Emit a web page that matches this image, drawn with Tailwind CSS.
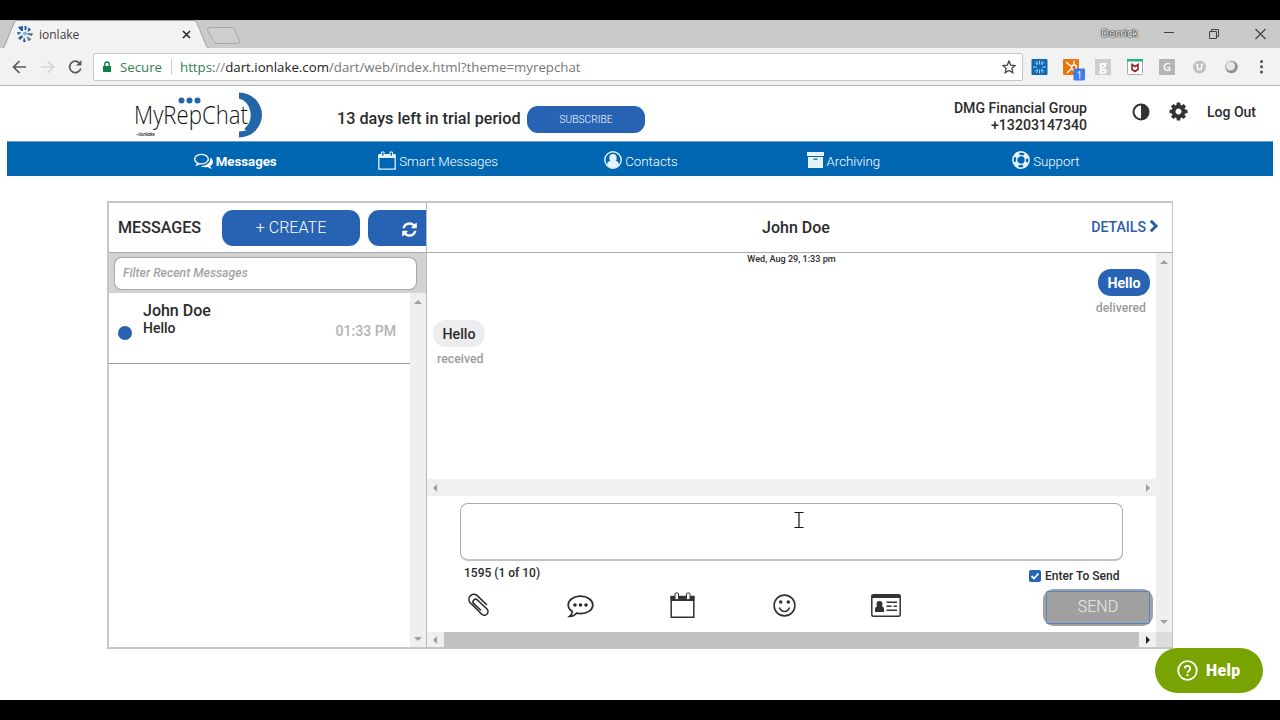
<!DOCTYPE html>
<html lang="en">
<head>
    <meta charset="UTF-8">
    <meta name="viewport" content="width=device-width, initial-scale=1.0">
    <title>ionlake</title>
    <script src="https://cdn.jsdelivr.net/npm/@tailwindcss/browser@4"></script>
</head>
<body class="w-[1280px] h-[720px] overflow-hidden bg-black py-5 font-['Roboto',sans-serif] text-[#2b2b2b]">

    <!-- Browser tabs -->
    <div class="h-7 bg-[#cacaca] flex font-['Open_Sans',sans-serif] relative">
        <svg class="absolute left-0 top-0" width="260" height="28" viewBox="0 0 260 28">
            <path d="M0 28.500H2Q4 28 5 25L14 3Q15 .5 18 .5H193Q196 .5 197 3L206 25Q207 28 210 28.500Z" fill="#f2f2f2" stroke="#a0a0a0"/>
            <path d="M210 7.500H232Q234 7.500 235 10L239.500 21Q240 23.500 238 23.500H217Q215 23.500 214 21L207.500 10Q207 7.500 210 7.500Z" fill="#cfcfcf" stroke="#a8a8a8"/>
        </svg>
        <div class="relative flex items-center w-[210px] pl-[17px] pr-[19px]">
            <svg width="16" height="16" viewBox="0 0 16 16" fill="#1b62a5">
                <path d="M1 1l5-1v5H4zM7.500 0h2v4h-2zM11.500 1l2.500 3-3.500 2zM0 6l4.500.5L1 9zM1 12l4-3 1 2-3 3zM7 11l2 5H6z"/>
                <path d="M10 7h6l-1 3-4-1zM9.500 10l5 3-3 2.500z" fill="#6b7d92"/>
                <circle cx="8" cy="7.500" r="2" fill="#7db4df"/>
            </svg>
            <span class="ml-[6px] mt-[2px] text-[12px] leading-[28px] text-[#3d3d3d] grow">ionlake</span>
            <svg width="9" height="9" viewBox="0 0 9 9" stroke="#222" stroke-width="1.500"><path d="M1 1l7 7M8 1l-7 7"/></svg>
        </div>
        <div class="grow"></div>
        <div class="flex items-center text-[11px] text-white">
            <span class="w-[63px] -mt-[2px] font-medium [text-shadow:0_0_1px_#000,0_0_1px_#000,0_0_2px_#333]">Derrick</span>
            <svg width="116" height="16" viewBox="0 0 116 16" fill="none" stroke="#444">
                <path d="M0 6.500h10"/>
                <path d="M45.500 5.500h7v7h-7zM47.500 5.500v-2h7v7h-2"/>
                <path d="M91.500 3l10 10M101.500 3l-10 10" stroke-width="1.200"/>
            </svg>
        </div>
    </div>

    <!-- Address bar -->
    <div class="h-[38px] bg-[#f2f2f2] border-b border-[#b5b5b5] flex items-center font-['Open_Sans',sans-serif]">
        <svg class="shrink-0" width="93" height="38" viewBox="0 0 93 38" fill="none" stroke="#5a5a5a" stroke-width="1.700">
            <path d="M26 19H14M19.500 13l-6 6 6 6"/>
            <path d="M41 19h12M47.500 13l6 6-6 6" stroke="#d5d5d5"/>
            <path d="M79.500 15a5.700 5.700 0 1 0 1.300 5.500"/>
            <path d="M81.500 12v5.500H76z" fill="#5a5a5a" stroke="none"/>
        </svg>
        <div class="w-[930px] h-[28px] bg-white border border-[#c6c6c6] rounded-[2px] flex items-center text-[13.250px]">
            <svg class="ml-[9px]" width="8" height="12" viewBox="0 0 8 12"><path d="M0 5h8v6H0z" fill="#0b8043"/><path d="M1.800 5V3.200a2.200 2.200 0 0 1 4.400 0V5" fill="none" stroke="#0b8043" stroke-width="1.300"/></svg>
            <span class="ml-[9px] mt-[2px] w-[51px] text-[#2f8050]">Secure</span>
            <span class="w-px h-4 bg-[#ccc]"></span>
            <span class="ml-[8px] mt-[2px] text-[#222] whitespace-nowrap"><span class="text-[#2f8050]">https:</span><span class="text-[#888]">//</span>dart.ionlake.com<span class="text-[#777]">/dart/web/index.html?theme=myrepchat</span></span>
            <span class="grow"></span>
            <svg class="mr-[6px]" width="14" height="14" viewBox="0 0 14 14" fill="none" stroke="#444" stroke-width="1.300"><path d="M7 1l1.700 4.100 4.400.4-3.300 2.900 1 4.300L7 10.400l-3.800 2.300 1-4.300L.9 5.500l4.400-.4z"/></svg>
        </div>
        <!-- Extensions -->
        <svg class="shrink-0 ml-px" width="256" height="38" viewBox="0 0 256 38">
            <rect x="7.500" y="11" width="16" height="16" rx="1" fill="#0d69b3"/>
            <g stroke="#d6e9f8" stroke-width=".8" fill="none"><path d="M15.500 12.500v4M15.500 21.500v4M9 19h4M18 19h4M11 14.500l2.500 2.500M17.500 21l2.500 2.500M20 14.500L17.500 17M13.500 21L11 23.500M12.500 13l1.300 3.200M18.500 13l-1.300 3.200M12.500 25l1.300-3.200M18.500 25l-1.300-3.200"/></g>
            <rect x="39" y="11" width="16" height="16" rx="1" fill="#e8760b"/>
            <g stroke="#fff" fill="none"><path d="M42 14l6 5M50 12.500v4M47 21l-4 4" stroke-width="1.300"/><circle cx="50" cy="19.500" r="2.500" stroke-width="1.500"/></g>
            <rect x="49.500" y="20.500" width="11.500" height="12" rx="1" fill="#3f7de8"/>
            <text x="55.300" y="30.500" font-size="10" text-anchor="middle" fill="#fff">1</text>
            <rect x="71" y="11" width="16" height="16" fill="#cdcdcd"/>
            <text x="79" y="22.500" font-size="14" font-weight="700" text-anchor="middle" fill="#fff">g</text>
            <rect x="103.500" y="11.500" width="15" height="15" rx="1" fill="#fff" stroke="#aaa"/>
            <path d="M103 11h16v2.500h-16z" fill="#1fb57b"/>
            <path d="M108 16.500v5l3 2 3-2v-5l-3 2z" fill="#fff" stroke="#a01e2d" stroke-width="1.600"/>
            <rect x="135" y="11" width="16" height="16" fill="#b5b5b5"/>
            <text x="143" y="23" font-size="11" font-weight="600" text-anchor="middle" fill="#fff">G</text>
            <circle cx="175.500" cy="19" r="6.500" fill="#c0c0c0"/>
            <path d="M172 16.500h1.500v3a2 2 0 0 0 4 0v-3h1.500" stroke="#fff" stroke-width="1.300" fill="none"/>
            <circle cx="207.500" cy="19" r="6.200" fill="#8e8e8e"/>
            <circle cx="206.600" cy="18" r="4.600" fill="#e6e6e6"/>
            <g fill="#505050"><circle cx="237.500" cy="13.500" r="1.500"/><circle cx="237.500" cy="18.700" r="1.500"/><circle cx="237.500" cy="23.900" r="1.500"/></g>
        </svg>
    </div>

    <div class="h-[614px] bg-white px-[7px] relative">

        <!-- Header -->
        <header class="h-[55px] flex font-medium">
            <svg class="ml-[126px] mt-[4px] shrink-0 overflow-visible" width="130" height="50" viewBox="0 0 130 50">
                <g fill="#2366a8"><circle cx="48.500" cy="10.500" r="3"/><circle cx="56.500" cy="10.500" r="3"/><circle cx="64.500" cy="10.500" r="3"/></g>
                <path d="M106 2.500A23 22.500 0 0 1 106 47.500V41.500Q111 41 113 40.500L111.500 38.500A15.500 17 0 0 0 106 8.500Z" fill="#2366a8"/>
                <text x="1" y="34" font-family="Open Sans" font-weight="300" font-size="25.500" fill="#111" textLength="114" lengthAdjust="spacingAndGlyphs">MyRepChat</text>
                <text x="3" y="46" font-family="Open Sans" font-weight="600" font-size="5" font-style="italic" fill="#222" textLength="19">-‹ionlake</text>
            </svg>
            <div class="ml-[74px] mt-[23px] text-[16.200px] leading-[20px] whitespace-nowrap w-[190px]">13 days left in trial period</div>
            <button class="mt-[20px] w-[118px] h-[27px] rounded-[11px] bg-[#2762b3] text-white text-[10.200px] font-light shrink-0">SUBSCRIBE</button>
            <div class="grow"></div>
            <div class="mt-[14px] text-right text-[14.100px] leading-[16.500px] whitespace-nowrap">DMG Financial Group<br>+13203147340</div>
            <svg class="ml-[44px] mt-[16px]" width="20" height="20" viewBox="0 0 20 20"><circle cx="10" cy="10" r="7.500" fill="none" stroke="#333" stroke-width="2"/><path d="M10 2a8 8 0 0 1 0 16z" fill="#333"/></svg>
            <svg class="ml-[17px] mt-[15px]" width="21" height="21" viewBox="0 0 1792 1792" fill="#333"><path d="M1152 896q0-106-75-181t-181-75-181 75-75 181 75 181 181 75 181-75 75-181zm512-109v222q0 12-8 23t-20 13l-185 28q-19 54-39 91 35 50 107 138 10 12 10 25t-9 23q-27 37-99 108t-94 71q-12 0-26-9l-138-108q-44 23-91 38-16 136-29 186-7 28-36 28h-222q-14 0-24.500-8.500t-11.500-21.500l-28-184q-49-16-90-37l-141 107q-10 9-25 9-14 0-25-11-126-114-165-168-7-10-7-23 0-12 8-23 15-21 51-66.500t54-70.500q-27-50-41-99l-183-27q-13-2-21-12.500t-8-23.500v-222q0-12 8-23t19-13l186-28q14-46 39-92-40-57-107-138-10-12-10-24 0-10 9-23 26-36 98.500-107.500t94.500-71.500q13 0 26 10l138 107q44-23 91-38 16-136 29-186 7-28 36-28h222q14 0 24.500 8.500t11.500 21.500l28 184q49 16 90 37l142-107q9-9 24-9 13 0 25 10 129 119 165 170 7 8 7 22 0 12-8 23-15 21-51 66.500t-54 70.500q26 50 41 98l183 28q13 2 21 12.500t8 23.500z"/></svg>
            <a class="ml-[18px] mr-[17px] mt-[16px] text-[14px] leading-[20px] whitespace-nowrap">Log Out</a>
        </header>

        <!-- Main menu -->
        <nav class="h-[35px] bg-[#0066b2] border-t border-[#6f9fc6] text-white text-[13.250px] font-light pl-[128px] pr-[126px]">
            <div class="grid grid-cols-5 h-full pt-[2px]">
                <a class="flex items-center justify-center gap-[3px] font-bold">
                    <svg class="-ml-[2px]" width="19" height="19" viewBox="0 0 1792 1792" fill="#fff"><path d="M704 384q-153 0-286 52t-211.500 141-78.500 191q0 82 53 158t149 132l97 56-35 84q34-20 62-39l44-31 53 10q78 14 153 14 153 0 286-52t211.500-141 78.500-191-78.500-191-211.500-141-286-52zm0-128q191 0 353.500 68.500t256.500 186.500 94 257-94 257-256.500 186.500-353.500 68.500q-86 0-176-16-124 88-278 128-36 9-86 16h-3q-11 0-20.500-8t-11.500-21q-1-3-1-6.500t.5-6.500 2-6l2.500-5 3.500-5.500 4-5 4.500-5 4-4.500q5-6 23-25t26-29.500 22.500-29 25-38.500 20.500-44q-124-72-195-177t-71-224q0-139 94-257t256.500-186.500 353.500-68.500zm822 1169q10 24 20.500 44t25 38.500 22.500 29 26 29.500 23 25q1 1 4 4.500t4.500 5 4 5 3.500 5.500l2.500 5 2 6 .5 6.500-1 6.500q-3 14-13 22t-22 7q-50-7-86-16-154-40-278-128-90 16-176 16-271 0-472-132 58 4 88 4 161 0 309-45t264-129q125-92 192-212t67-254q0-77-23-152 129 71 204 178t75 230q0 120-71 224.500t-195 176.500z"/></svg>
                    <span class="pt-[4px]">Messages</span>
                </a>
                <a class="flex items-center justify-center gap-[3px]">
                    <svg class="-ml-px" width="18" height="19" viewBox="0 0 18 19"><path d="M.8 4.500h16.400v13.700H.8z" fill="none" stroke="#e6f1fa" stroke-width="1.300"/><path d="M.5 3h17v4H.5z" fill="#e6f1fa"/><path d="M3.500 1h2.500v4H3.500zM12 1h2.500v4H12z" fill="#0066b2" stroke="#e6f1fa"/></svg>
                    <span class="pt-[4px]">Smart Messages</span>
                </a>
                <a class="flex items-center justify-center gap-[3px]">
                    <svg width="18" height="18" viewBox="0 0 18 18"><circle cx="9" cy="9" r="8.200" fill="none" stroke="#e6f1fa" stroke-width="1.400"/><ellipse cx="9" cy="7" rx="3.700" ry="4" fill="#e6f1fa"/><path d="M3 14c0-2.500 1.500-3.800 3.300-4.200Q9 12 11.700 9.800C13.500 10.200 15 11.500 15 14Q12.500 17 9 17T3 14z" fill="#e6f1fa"/></svg>
                    <span class="pt-[4px]">Contacts</span>
                </a>
                <a class="flex items-center justify-center gap-[3px]">
                    <svg width="17" height="18" viewBox="0 0 17 18" fill="#e6f1fa"><path d="M0 1h17v4H0z"/><path d="M1 6h15v11H1zM6.500 7.500v1.200h4V7.500z" fill-rule="evenodd"/></svg>
                    <span class="pt-[4px]">Archiving</span>
                </a>
                <a class="flex items-center justify-center gap-[3px]">
                    <svg width="18" height="18" viewBox="0 0 18 18" fill="none"><circle cx="9" cy="9" r="6.300" stroke="#e6f1fa" stroke-width="5.200"/><circle cx="9" cy="9" r="6.200" stroke="#0066b2" stroke-width="2.200" stroke-dasharray="4.600 5.139" stroke-dashoffset="2.300"/></svg>
                    <span class="pt-[4px]">Support</span>
                </a>
            </div>
        </nav>

        <!-- Messages panel -->
        <main class="ml-[100px] mt-[25px] w-[1066px] h-[448px] border-2 border-r border-[#c4c7c7] flex">

            <!-- Conversation list -->
            <aside class="w-[318px] flex flex-col border-r border-[#b5b8b8] overflow-hidden shrink-0">
                <div class="h-[50px] border-b border-[#a6abab] flex items-center overflow-hidden shrink-0">
                    <h2 class="ml-[9px] mt-[2px] w-[104px] text-[16.100px] font-medium shrink-0">MESSAGES</h2>
                    <button class="w-[138px] h-[36px] rounded-[11px] bg-[#2762b3] text-white text-[16.100px] font-light shrink-0 pt-px">+ CREATE</button>
                    <button class="ml-2 w-[82px] h-[36px] rounded-[11px] bg-[#2762b3] shrink-0 flex items-center justify-center">
                        <svg class="mt-[3px]" width="17" height="17" viewBox="0 0 1792 1792" fill="#fff"><path d="M1639 1056q0 5-1 7-64 268-268 434.500t-478 166.500q-146 0-282.500-55t-243.500-157l-129 129q-19 19-45 19t-45-19-19-45v-448q0-26 19-45t45-19h448q26 0 45 19t19 45-19 45l-137 137q71 66 161 102t187 36q134 0 250-65t186-179q11-17 53-117 8-23 30-23h192q13 0 22.500 9.500t9.500 22.500zm25-800v448q0 26-19 45t-45 19h-448q-26 0-45-19t-19-45 19-45l138-138q-148-137-349-137-134 0-250 65t-186 179q-11 17-53 117-8 23-30 23h-199q-13 0-22.500-9.500t-9.500-22.500v-7q65-268 270-434.500t480-166.500q146 0 284 55.500t245 156.500l130-129q19-19 45-19t45 19 19 45z"/></svg>
                    </button>
                </div>
                <div class="h-[40px] bg-[#d2d3d3] pl-[5px] pt-[4px] shrink-0">
                    <div class="w-[303px] h-[33px] rounded-[8px] border border-[#a9acac] shadow-[0_0_1px_#a9acac] bg-white pl-[8px] text-[12.250px] leading-[31px] font-medium italic text-[#a3a3a3]">Filter Recent Messages</div>
                </div>
                <div class="grow flex">
                    <div class="grow">
                        <div class="h-[71px] border-b border-[#9a9d9d] flex">
                            <span class="ml-[9px] mt-[33px] size-[14px] rounded-full bg-[#2762b3]"></span>
                            <div class="ml-[11px] mt-[8px] grow font-medium">
                                <div class="text-[16px] leading-[19px]">John Doe</div>
                                <div class="text-[14px] leading-[17px]">Hello</div>
                            </div>
                            <span class="mr-[14px] mt-[28px] text-[14.100px] leading-[20px] font-medium text-[#b0b4b5]">01:33 PM</span>
                        </div>
                    </div>
                    <div class="w-[16px] bg-[#efefef] flex flex-col justify-between items-center pt-[7px] pb-[6px]">
                        <svg width="8" height="4" viewBox="0 0 8 4" fill="#a0a0a0"><path d="M0 4l4-4 4 4z"/></svg>
                        <svg width="8" height="4" viewBox="0 0 8 4" fill="#a0a0a0"><path d="M0 0l4 4 4-4z"/></svg>
                    </div>
                </div>
            </aside>

            <!-- Open conversation -->
            <section class="grow flex flex-col">
                <div class="h-[50px] border-b border-[#a6abab] flex items-center font-medium shrink-0">
                    <div class="w-[180px]"></div>
                    <h3 class="grow text-center text-[16px] pr-[7px] mt-px">John Doe</h3>
                    <a class="w-[180px] pr-[13px] flex items-center justify-end gap-[3px] text-[14.100px] text-[#2a5caa]">DETAILS
                        <svg class="-mt-[2px]" width="10" height="14" viewBox="0 0 10 14" fill="none" stroke="#2a5caa" stroke-width="3"><path d="M1.800 1.800L7 7l-5.200 5.200"/></svg>
                    </a>
                </div>
                <div class="grow flex">
                    <div class="w-[729px] flex flex-col font-medium shrink-0">
                        <div class="h-[226px] shrink-0 pl-[6px] pr-[6px]">
                            <div class="h-[15px] text-center text-[9.100px] leading-[12px]">Wed, Aug 29, 1:33 pm</div>
                            <div class="flex flex-col items-end">
                                <div class="mt-px w-[52px] h-[27px] rounded-[13px] bg-[#2762b3] text-white text-[14.200px] leading-[28px] font-bold text-center">Hello</div>
                                <div class="mr-[4px] mt-[4px] text-[12.300px] leading-[16px] text-[#9c9c9c]">delivered</div>
                            </div>
                            <div class="flex flex-col items-start mt-[4px]">
                                <div class="w-[52px] h-[27px] rounded-[13px] bg-[#ededf0] text-[14.200px] leading-[28px] text-center">Hello</div>
                                <div class="ml-[4px] mt-[4px] text-[12.300px] leading-[16px] text-[#9c9c9c]">received</div>
                            </div>
                        </div>
                        <div class="h-[17px] shrink-0 bg-[#f0f0f0] flex items-center justify-between px-[6px]">
                            <svg width="4" height="8" viewBox="0 0 4 8" fill="#a0a0a0"><path d="M4 0L0 4l4 4z"/></svg>
                            <svg width="4" height="8" viewBox="0 0 4 8" fill="#a0a0a0"><path d="M0 0l4 4-4 4z"/></svg>
                        </div>

                        <!-- Composer -->
                        <div class="h-[136px] shrink-0 pt-[7px]">
                            <div class="ml-[33px] w-[663px] h-[58px] rounded-[8px] border border-[#a9acac] border-b-2 border-b-[#bfc1c1] bg-white"></div>
                            <div class="flex">
                                <div class="w-[611px]">
                                    <div class="ml-[37px] mt-[4px] text-[12px] leading-[17px]">1595 (1 of 10)</div>
                                    <div class="mt-[8px] flex">
                                        <div class="w-[102px] h-[30px] flex items-center justify-center">
                                            <svg width="22" height="24" viewBox="0 0 22 24" fill="none" stroke="#2b2b2b" stroke-width="1.600" stroke-linecap="round"><path d="M19.500 11.500L10.500 2.900A5 5 0 0 0 3 9.500L14.500 21A3.600 3.600 0 0 0 20 16L10.500 7A2.600 2.600 0 0 0 6.800 10.700L13.500 17"/></svg>
                                        </div>
                                        <div class="w-[102px] h-[30px] flex items-center justify-center">
                                            <svg class="mt-[3px]" width="27" height="23" viewBox="0 0 27 23"><path d="M13.500 1.200C20.500 1.200 25.800 5 25.800 10S20.500 18.600 13.500 18.600Q11.500 18.600 9.500 18.200Q6.500 21.500 2.500 21.500Q5 19.500 5.300 16.500Q1.200 14 1.200 10C1.200 5 6.500 1.200 13.500 1.200Z" fill="none" stroke="#2b2b2b" stroke-width="1.700"/><g fill="#2b2b2b"><circle cx="8" cy="10" r="1.800"/><circle cx="13.500" cy="10" r="1.800"/><circle cx="19" cy="10" r="1.800"/></g></svg>
                                        </div>
                                        <div class="w-[102px] h-[30px] flex items-center justify-center">
                                            <svg width="25" height="27" viewBox="0 0 25 27"><path d="M1.200 4.500h22.600v20.800H1.200z" fill="none" stroke="#333" stroke-width="1.500"/><path d="M.5 4h24v5H.5z" fill="#333"/><rect x="5" y="1" width="3.500" height="6.500" rx="1" fill="#fff" stroke="#333"/><rect x="16.500" y="1" width="3.500" height="6.500" rx="1" fill="#fff" stroke="#333"/></svg>
                                        </div>
                                        <div class="w-[102px] h-[30px] flex items-center justify-center">
                                            <svg width="23" height="23" viewBox="0 0 23 23"><circle cx="11.500" cy="11.500" r="10.400" fill="none" stroke="#333" stroke-width="1.600"/><g fill="#333"><circle cx="7.700" cy="8" r="1.800"/><circle cx="15.300" cy="8" r="1.800"/></g><path d="M6.500 13.500q1.500 4 5 4t5-4" fill="none" stroke="#333" stroke-width="1.600"/></svg>
                                        </div>
                                        <div class="w-[102px] h-[30px] flex items-center justify-center">
                                            <svg width="30" height="23" viewBox="0 0 30 23" fill="#333"><rect x=".8" y=".8" width="28.400" height="21.400" rx="1.500" fill="none" stroke="#333" stroke-width="1.500"/><path d="M.5 1h29v3H.5z"/><circle cx="8.500" cy="10" r="3"/><path d="M4 18v-2.500q0-3 2.500-3.500h4q2.500.5 2.500 3.500V18z"/><path d="M15.500 7.500H26V9H15.500zM15.500 11.500h5V13h-5zM22.500 11.500H26V13h-3.500zM15.500 15.500H26V17H15.500z"/></svg>
                                        </div>
                                    </div>
                                </div>
                                <div class="pt-[9px]">
                                    <label class="ml-[-9px] h-[13px] flex items-center gap-[4px] text-[12.050px]">
                                        <svg class="-mt-px" width="12" height="12" viewBox="0 0 12 12"><rect width="12" height="12" rx="2" fill="#2762b3"/><path d="M2.500 6l2.500 2.500 4.500-5" fill="none" stroke="#fff" stroke-width="1.800"/></svg>
                                        <span>Enter To Send</span>
                                    </label>
                                    <button class="ml-[5px] mt-[6px] w-[110px] h-[37px] rounded-[11px] bg-[#a0a0a0] flex items-center justify-center">
                                        <span class="w-[104px] h-[33px] ring-1 ring-inset ring-[#5583d3] rounded-[2px] text-[#e9e9e9] text-[16.100px] leading-[32px] font-light">SEND</span>
                                    </button>
                                </div>
                            </div>
                        </div>
                    </div>
                    <div class="grow bg-[#efefef] flex flex-col justify-between items-center pt-[7px] pb-[8px]">
                        <svg width="8" height="4" viewBox="0 0 8 4" fill="#a0a0a0"><path d="M0 4l4-4 4 4z"/></svg>
                        <svg width="8" height="4" viewBox="0 0 8 4" fill="#a0a0a0"><path d="M0 0l4 4 4-4z"/></svg>
                    </div>
                </div>
                <div class="h-[15px] shrink-0 flex bg-[#f0f0f0]">
                    <div class="w-[17px] flex items-center pl-[6px]"><svg width="4" height="8" viewBox="0 0 4 8" fill="#a0a0a0"><path d="M4 0L0 4l4 4z"/></svg></div>
                    <div class="w-[695px] bg-[#c1c1c1]"></div>
                    <div class="w-[17px] flex items-center pl-[7px]"><svg width="4" height="8" viewBox="0 0 4 8" fill="#222"><path d="M0 0l4 4-4 4z"/></svg></div>
                    <div class="grow bg-[#dcdcdc]"></div>
                </div>
            </section>
        </main>

        <!-- Text cursor -->
        <svg class="absolute left-[794px] top-[425px]" width="10" height="18" viewBox="0 0 10 18" stroke="#111" fill="none"><path d="M.5 1.500h9M.5 16.500h9M5 1.500v15" stroke-width="1.200"/></svg>

        <!-- Help widget -->
        <button class="absolute left-[1155px] top-[562px] w-[108px] h-[45px] rounded-full bg-[#78a300] text-white flex items-center pl-[22px] gap-[8px] text-[15.800px] font-black">
            <svg width="21" height="21" viewBox="0 0 21 21" fill="none" stroke="#fff"><circle cx="10.500" cy="10.500" r="9.300" stroke-width="1.800"/><path d="M7.800 8.500a2.700 2.700 0 1 1 4.200 2.200q-1.500 1-1.500 2" stroke-width="1.900"/><path d="M10.500 14v2" stroke-width="2"/></svg>
            <span class="tracking-[.4px]">Help</span>
        </button>
    </div>

</body>
</html>
